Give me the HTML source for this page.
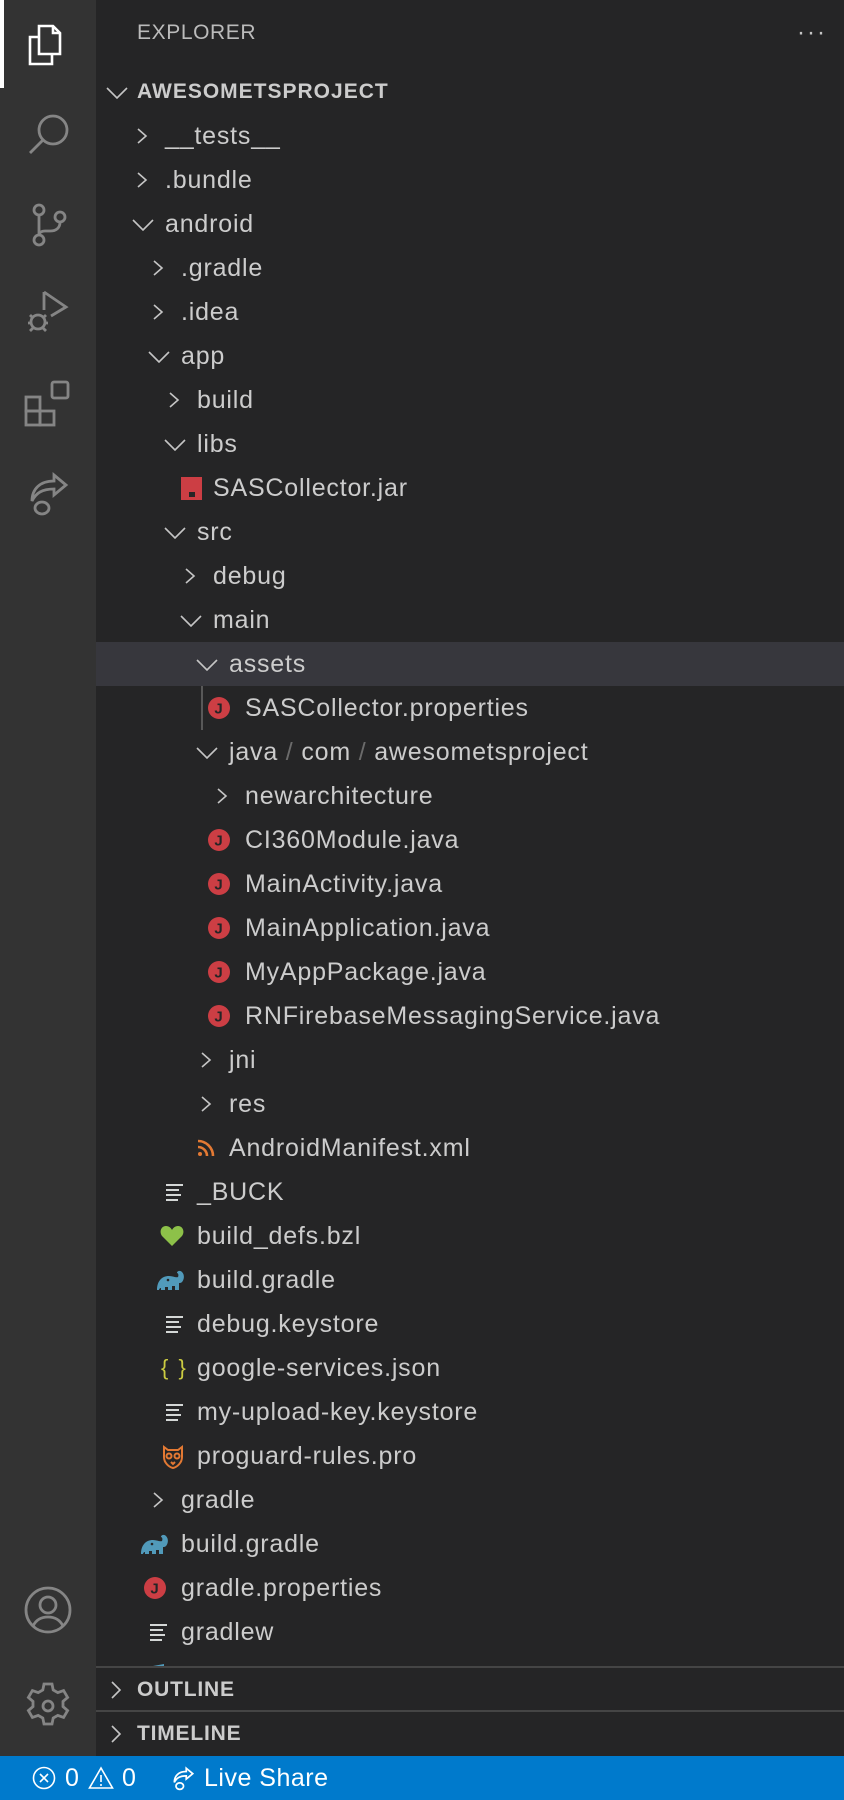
<!DOCTYPE html>
<html><head><meta charset="utf-8"><style>
*{margin:0;padding:0;box-sizing:border-box}
body{width:844px;height:1800px;background:#252526;font-family:"Liberation Sans",sans-serif;overflow:hidden;position:relative;color:#cccccc}
#act{position:absolute;left:0;top:0;width:96px;height:1756px;background:#333333}
.ai{position:absolute;left:24px;width:48px;height:48px}
#tree{position:absolute;left:96px;top:0;width:748px;height:1668px;overflow:hidden}
.r{position:absolute;left:0;width:748px;height:44px;line-height:44px;font-size:25px;letter-spacing:0.8px;color:#cccccc;white-space:nowrap}
.r span.t{position:absolute}
.r svg{position:absolute}
.sec{position:absolute;left:96px;width:748px;height:44px;line-height:44px;font-size:21px;font-weight:bold;letter-spacing:0.8px;color:#cccccc;border-top:2px solid #454545}
#status{position:absolute;left:0;top:1756px;width:844px;height:44px;background:#007acc;color:#fff;font-size:25px;line-height:44px}
</style></head><body>
<div id="act">
<div style="position:absolute;left:0;top:0;width:4px;height:88px;background:#fff"></div>
<svg class="ai" style="top:21px" viewBox="0 0 24 24" fill="none" stroke="#fff" stroke-width="1.3"><path d="M7.5 2.5h7l3.5 3.5v10.5h-10.5z"/><path d="M14.5 2.5v3.5h3.5"/><path d="M7.5 8h-4.5v13.5h11v-5"/></svg>
<svg class="ai" style="top:111px" viewBox="0 0 24 24" fill="none" stroke="#858585" stroke-width="1.4"><circle cx="14.5" cy="9.5" r="7"/><path d="M9.5 14.5l-6.5 6.5"/></svg>
<svg class="ai" style="top:201px" viewBox="0 0 24 24" fill="none" stroke="#858585" stroke-width="1.4"><circle cx="7.5" cy="4.5" r="2.5"/><circle cx="7.5" cy="19.5" r="2.5"/><circle cx="18" cy="8" r="2.5"/><path d="M7.5 7v10M18 10.5c0 3-2 4.5-5 4.5h-2.5c-2 0-3 1-3 2"/></svg>
<svg class="ai" style="top:289px" viewBox="0 0 24 24" fill="none" stroke="#858585" stroke-width="1.4"><path d="M10 1.5v9M10 1.5l11 7.5-7.5 4.5"/><circle cx="7" cy="16.5" r="3.5"/><path d="M3 13l1.5 1.5M11 13l-1.5 1.5M2 17h1.5M10.5 17h1.5M3 21l1.5-1.5M11 21l-1.5-1.5"/></svg>
<svg class="ai" style="top:379px" viewBox="0 0 24 24" fill="none" stroke="#858585" stroke-width="1.4"><rect x="1" y="9" width="7" height="7"/><rect x="1" y="16" width="7" height="7"/><rect x="8" y="16" width="7" height="7"/><rect x="14" y="1.5" width="8" height="8" rx="1"/></svg>
<svg class="ai" style="top:469px" viewBox="0 0 24 24" fill="none" stroke="#858585" stroke-width="1.4"><path d="M15 3l6 5-6 5v-3c-6 0-9 2-11 6 0-6 4-10 11-10z"/><ellipse cx="9" cy="19.5" rx="3.5" ry="3"/></svg>
<svg class="ai" style="top:1586px" viewBox="0 0 24 24" fill="none" stroke="#858585" stroke-width="1.4"><circle cx="12" cy="12" r="11"/><circle cx="12" cy="9.5" r="4"/><path d="M4.5 20c1.5-3 4-4.5 7.5-4.5s6 1.5 7.5 4.5"/></svg>
<svg class="ai" style="top:1682px" viewBox="0 0 24 24" fill="none" stroke="#858585" stroke-width="1.4"><path d="M10 1h4l.6 3 2.3 1.3 2.9-1 2 3.4-2.3 2v2.6l2.3 2-2 3.4-2.9-1-2.3 1.3-.6 3h-4l-.6-3-2.3-1.3-2.9 1-2-3.4 2.3-2v-2.6l-2.3-2 2-3.4 2.9 1 2.3-1.3z"/><circle cx="12" cy="12" r="2.5"/></svg>
</div>

<div style="position:absolute;left:137px;top:14px;font-size:21px;letter-spacing:0.6px;color:#bbbbbb;line-height:38px">EXPLORER</div>
<div style="position:absolute;left:797px;top:18px;color:#c5c5c5;font-size:24px;letter-spacing:2px;line-height:30px">···</div>

<div id="tree">
<div style="position:absolute;left:0;top:642px;width:748px;height:44px;background:#37373d"></div>
<div style="position:absolute;left:105px;top:686px;width:2px;height:44px;background:#585858"></div>

<div class="r" style="top:70px;font-size:21px;font-weight:bold;letter-spacing:1px"><svg style="left:10px;top:17px" width="22" height="12" viewBox="0 0 22 12" fill="none" stroke="#c5c5c5" stroke-width="1.6"><path d="M1 1l10 10 10-10"/></svg><span class="t" style="left:41px">AWESOMETSPROJECT</span></div>

<!-- generic rows: text left = 53+16*d (relative to tree) -->
<div class="r" style="top:114px"><svg style="left:40px;top:14px" width="14" height="16" viewBox="0 0 14 16" fill="none" stroke="#c5c5c5" stroke-width="1.6"><path d="M2 1l8 7-8 7"/></svg><span class="t" style="left:69px">__tests__</span></div>
<div class="r" style="top:158px"><svg style="left:40px;top:14px" width="14" height="16" viewBox="0 0 14 16" fill="none" stroke="#c5c5c5" stroke-width="1.6"><path d="M2 1l8 7-8 7"/></svg><span class="t" style="left:69px">.bundle</span></div>
<div class="r" style="top:202px"><svg style="left:36px;top:17px" width="22" height="12" viewBox="0 0 22 12" fill="none" stroke="#c5c5c5" stroke-width="1.6"><path d="M1 1l10 10 10-10"/></svg><span class="t" style="left:69px">android</span></div>
<div class="r" style="top:246px"><svg style="left:56px;top:14px" width="14" height="16" viewBox="0 0 14 16" fill="none" stroke="#c5c5c5" stroke-width="1.6"><path d="M2 1l8 7-8 7"/></svg><span class="t" style="left:85px">.gradle</span></div>
<div class="r" style="top:290px"><svg style="left:56px;top:14px" width="14" height="16" viewBox="0 0 14 16" fill="none" stroke="#c5c5c5" stroke-width="1.6"><path d="M2 1l8 7-8 7"/></svg><span class="t" style="left:85px">.idea</span></div>
<div class="r" style="top:334px"><svg style="left:52px;top:17px" width="22" height="12" viewBox="0 0 22 12" fill="none" stroke="#c5c5c5" stroke-width="1.6"><path d="M1 1l10 10 10-10"/></svg><span class="t" style="left:85px">app</span></div>
<div class="r" style="top:378px"><svg style="left:72px;top:14px" width="14" height="16" viewBox="0 0 14 16" fill="none" stroke="#c5c5c5" stroke-width="1.6"><path d="M2 1l8 7-8 7"/></svg><span class="t" style="left:101px">build</span></div>
<div class="r" style="top:422px"><svg style="left:68px;top:17px" width="22" height="12" viewBox="0 0 22 12" fill="none" stroke="#c5c5c5" stroke-width="1.6"><path d="M1 1l10 10 10-10"/></svg><span class="t" style="left:101px">libs</span></div>
<div class="r" style="top:466px"><svg style="left:85px;top:11px" width="22" height="24" viewBox="0 0 22 24"><rect x="0" y="0" width="21" height="23" fill="#cc3e44"/><rect x="8" y="15" width="6" height="5" fill="#252526"/></svg><span class="t" style="left:117px">SASCollector.jar</span></div>
<div class="r" style="top:510px"><svg style="left:68px;top:17px" width="22" height="12" viewBox="0 0 22 12" fill="none" stroke="#c5c5c5" stroke-width="1.6"><path d="M1 1l10 10 10-10"/></svg><span class="t" style="left:101px">src</span></div>
<div class="r" style="top:554px"><svg style="left:88px;top:14px" width="14" height="16" viewBox="0 0 14 16" fill="none" stroke="#c5c5c5" stroke-width="1.6"><path d="M2 1l8 7-8 7"/></svg><span class="t" style="left:117px">debug</span></div>
<div class="r" style="top:598px"><svg style="left:84px;top:17px" width="22" height="12" viewBox="0 0 22 12" fill="none" stroke="#c5c5c5" stroke-width="1.6"><path d="M1 1l10 10 10-10"/></svg><span class="t" style="left:117px">main</span></div>
<div class="r" style="top:642px"><svg style="left:100px;top:17px" width="22" height="12" viewBox="0 0 22 12" fill="none" stroke="#c5c5c5" stroke-width="1.6"><path d="M1 1l10 10 10-10"/></svg><span class="t" style="left:133px">assets</span></div>
<div class="r" style="top:686px"><svg style="left:112px;top:11px" width="22" height="22" viewBox="0 0 22 22"><circle cx="11" cy="11" r="11" fill="#cc3e44"/><text x="11" y="16.5" text-anchor="middle" font-family="Liberation Sans" font-weight="bold" font-size="15" fill="#252526">J</text></svg><span class="t" style="left:149px">SASCollector.properties</span></div>
<div class="r" style="top:730px"><svg style="left:100px;top:17px" width="22" height="12" viewBox="0 0 22 12" fill="none" stroke="#c5c5c5" stroke-width="1.6"><path d="M1 1l10 10 10-10"/></svg><span class="t" style="left:133px">java<span style="color:#6b6b6b"> / </span>com<span style="color:#6b6b6b"> / </span>awesometsproject</span></div>
<div class="r" style="top:774px"><svg style="left:120px;top:14px" width="14" height="16" viewBox="0 0 14 16" fill="none" stroke="#c5c5c5" stroke-width="1.6"><path d="M2 1l8 7-8 7"/></svg><span class="t" style="left:149px">newarchitecture</span></div>
<div class="r" style="top:818px"><svg style="left:112px;top:11px" width="22" height="22" viewBox="0 0 22 22"><circle cx="11" cy="11" r="11" fill="#cc3e44"/><text x="11" y="16.5" text-anchor="middle" font-family="Liberation Sans" font-weight="bold" font-size="15" fill="#252526">J</text></svg><span class="t" style="left:149px">CI360Module.java</span></div>
<div class="r" style="top:862px"><svg style="left:112px;top:11px" width="22" height="22" viewBox="0 0 22 22"><circle cx="11" cy="11" r="11" fill="#cc3e44"/><text x="11" y="16.5" text-anchor="middle" font-family="Liberation Sans" font-weight="bold" font-size="15" fill="#252526">J</text></svg><span class="t" style="left:149px">MainActivity.java</span></div>
<div class="r" style="top:906px"><svg style="left:112px;top:11px" width="22" height="22" viewBox="0 0 22 22"><circle cx="11" cy="11" r="11" fill="#cc3e44"/><text x="11" y="16.5" text-anchor="middle" font-family="Liberation Sans" font-weight="bold" font-size="15" fill="#252526">J</text></svg><span class="t" style="left:149px">MainApplication.java</span></div>
<div class="r" style="top:950px"><svg style="left:112px;top:11px" width="22" height="22" viewBox="0 0 22 22"><circle cx="11" cy="11" r="11" fill="#cc3e44"/><text x="11" y="16.5" text-anchor="middle" font-family="Liberation Sans" font-weight="bold" font-size="15" fill="#252526">J</text></svg><span class="t" style="left:149px">MyAppPackage.java</span></div>
<div class="r" style="top:994px"><svg style="left:112px;top:11px" width="22" height="22" viewBox="0 0 22 22"><circle cx="11" cy="11" r="11" fill="#cc3e44"/><text x="11" y="16.5" text-anchor="middle" font-family="Liberation Sans" font-weight="bold" font-size="15" fill="#252526">J</text></svg><span class="t" style="left:149px">RNFirebaseMessagingService.java</span></div>
<div class="r" style="top:1038px"><svg style="left:104px;top:14px" width="14" height="16" viewBox="0 0 14 16" fill="none" stroke="#c5c5c5" stroke-width="1.6"><path d="M2 1l8 7-8 7"/></svg><span class="t" style="left:133px">jni</span></div>
<div class="r" style="top:1082px"><svg style="left:104px;top:14px" width="14" height="16" viewBox="0 0 14 16" fill="none" stroke="#c5c5c5" stroke-width="1.6"><path d="M2 1l8 7-8 7"/></svg><span class="t" style="left:133px">res</span></div>
<div class="r" style="top:1126px"><svg style="left:101px;top:13px" width="18" height="18" viewBox="0 0 18 18" fill="none" stroke="#e37933" stroke-width="2.6"><circle cx="3" cy="15" r="2" fill="#e37933" stroke="none"/><path d="M1 8a9 9 0 0 1 9 9M1 2a15 15 0 0 1 15 15"/></svg><span class="t" style="left:133px">AndroidManifest.xml</span></div>
<div class="r" style="top:1170px"><svg style="left:70px;top:13px" width="18" height="18" viewBox="0 0 18 18" fill="#d4d7d6"><rect x="0" y="1" width="17" height="2"/><rect x="0" y="6" width="13" height="2"/><rect x="0" y="11" width="15" height="2"/><rect x="0" y="16" width="12" height="2"/></svg><span class="t" style="left:101px">_BUCK</span></div>
<div class="r" style="top:1214px"><svg style="left:64px;top:11px" width="24" height="22" viewBox="0 0 24 22"><path d="M12 21L2 11C-1 7 1 1 6 1c3 0 5 2 6 4 1-2 3-4 6-4 5 0 7 6 4 10z" fill="#8dc149"/></svg><span class="t" style="left:101px">build_defs.bzl</span></div>
<div class="r" style="top:1258px"><svg style="left:60px;top:10px" width="30" height="24" viewBox="0 0 30 24"><path d="M1 22c0-9 5-14 12-14 4 0 7 2 9 1 1-2 0-4-1-4 0-2 3-3 5-1 3 3 2 8 0 10-1 1-2 1-3 1v7h-4v-4h-3v4h-4v-3h-3v3h-4v-2c-1 0-2 1-2 2z" fill="#519aba"/><circle cx="12" cy="12" r="1.3" fill="#252526"/></svg><span class="t" style="left:101px">build.gradle</span></div>
<div class="r" style="top:1302px"><svg style="left:70px;top:13px" width="18" height="18" viewBox="0 0 18 18" fill="#d4d7d6"><rect x="0" y="1" width="17" height="2"/><rect x="0" y="6" width="13" height="2"/><rect x="0" y="11" width="15" height="2"/><rect x="0" y="16" width="12" height="2"/></svg><span class="t" style="left:101px">debug.keystore</span></div>
<div class="r" style="top:1346px"><span class="t" style="left:65px;color:#cbcb41;font-size:22px;letter-spacing:2px">{ }</span><span class="t" style="left:101px">google-services.json</span></div>
<div class="r" style="top:1390px"><svg style="left:70px;top:13px" width="18" height="18" viewBox="0 0 18 18" fill="#d4d7d6"><rect x="0" y="1" width="17" height="2"/><rect x="0" y="6" width="13" height="2"/><rect x="0" y="11" width="15" height="2"/><rect x="0" y="16" width="12" height="2"/></svg><span class="t" style="left:101px">my-upload-key.keystore</span></div>
<div class="r" style="top:1434px"><svg style="left:66px;top:11px" width="22" height="24" viewBox="0 0 22 24" fill="none" stroke="#e37933" stroke-width="2"><path d="M2 2l4 3h10l4-3v10c0 6-5 10-9 11-4-1-9-5-9-11z"/><circle cx="7" cy="11" r="2.5"/><circle cx="15" cy="11" r="2.5"/><path d="M9 17l2 2 2-2"/></svg><span class="t" style="left:101px">proguard-rules.pro</span></div>
<div class="r" style="top:1478px"><svg style="left:56px;top:14px" width="14" height="16" viewBox="0 0 14 16" fill="none" stroke="#c5c5c5" stroke-width="1.6"><path d="M2 1l8 7-8 7"/></svg><span class="t" style="left:85px">gradle</span></div>
<div class="r" style="top:1522px"><svg style="left:44px;top:10px" width="30" height="24" viewBox="0 0 30 24"><path d="M1 22c0-9 5-14 12-14 4 0 7 2 9 1 1-2 0-4-1-4 0-2 3-3 5-1 3 3 2 8 0 10-1 1-2 1-3 1v7h-4v-4h-3v4h-4v-3h-3v3h-4v-2c-1 0-2 1-2 2z" fill="#519aba"/><circle cx="12" cy="12" r="1.3" fill="#252526"/></svg><span class="t" style="left:85px">build.gradle</span></div>
<div class="r" style="top:1566px"><svg style="left:48px;top:11px" width="22" height="22" viewBox="0 0 22 22"><circle cx="11" cy="11" r="11" fill="#cc3e44"/><text x="11" y="16.5" text-anchor="middle" font-family="Liberation Sans" font-weight="bold" font-size="15" fill="#252526">J</text></svg><span class="t" style="left:85px">gradle.properties</span></div>
<div class="r" style="top:1610px"><svg style="left:54px;top:13px" width="18" height="18" viewBox="0 0 18 18" fill="#d4d7d6"><rect x="0" y="1" width="17" height="2"/><rect x="0" y="6" width="13" height="2"/><rect x="0" y="11" width="15" height="2"/><rect x="0" y="16" width="12" height="2"/></svg><span class="t" style="left:85px">gradlew</span></div>
<div class="r" style="top:1654px"><svg style="left:47px;top:10px" width="22" height="22" viewBox="0 0 22 22"><path d="M0 3l9-1v9H0zM10 2l11-2v11H10z" fill="#519aba"/></svg><span class="t" style="left:85px">gradlew.bat</span></div>
</div>

<div class="sec" style="top:1666px"><svg style="position:absolute;left:14px;top:12px" width="14" height="20" viewBox="0 0 14 20" fill="none" stroke="#c5c5c5" stroke-width="1.6"><path d="M2 2l8 8-8 8"/></svg><span style="position:absolute;left:41px">OUTLINE</span></div>
<div class="sec" style="top:1710px"><svg style="position:absolute;left:14px;top:12px" width="14" height="20" viewBox="0 0 14 20" fill="none" stroke="#c5c5c5" stroke-width="1.6"><path d="M2 2l8 8-8 8"/></svg><span style="position:absolute;left:41px">TIMELINE</span></div>

<div id="status">
<svg style="position:absolute;left:32px;top:10px" width="24" height="24" viewBox="0 0 24 24" fill="none" stroke="#fff" stroke-width="1.6"><circle cx="12" cy="12" r="10.5"/><path d="M8 8l8 8M16 8l-8 8"/></svg>
<span style="position:absolute;left:65px">0</span>
<svg style="position:absolute;left:88px;top:10px" width="26" height="24" viewBox="0 0 26 24" fill="none" stroke="#fff" stroke-width="1.6"><path d="M13 2L1.5 22h23z"/><path d="M13 9v7M13 18v2"/></svg>
<span style="position:absolute;left:122px">0</span>
<svg style="position:absolute;left:169px;top:9px" width="28" height="26" viewBox="0 0 24 24" fill="none" stroke="#fff" stroke-width="1.6"><path d="M15 3l6 5-6 5v-3c-6 0-9 2-11 6 0-6 4-10 11-10z"/><ellipse cx="9" cy="19.5" rx="3.5" ry="3"/></svg>
<span style="position:absolute;left:204px;letter-spacing:0.5px">Live Share</span>
</div>
</body></html>
